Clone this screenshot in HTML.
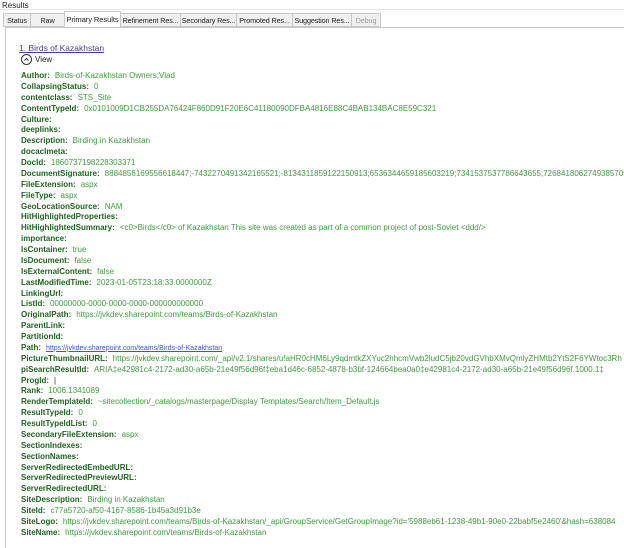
<!DOCTYPE html>
<html><head><meta charset="utf-8"><style>
body{margin:0;width:624px;height:533px;overflow:hidden;background:#fff;font-family:"Liberation Sans",sans-serif;font-size:8px;position:relative}
.hdr{position:absolute;left:2px;top:1px;font-size:8px;color:#222}
.hline{position:absolute;left:0;top:9px;width:624px;height:1px;background:#e6e6e6}
.tabs{position:absolute;left:3px;top:13px;height:14px}
.tab{position:absolute;top:0;border:1px solid #c8c8c8;background:#f0f0f0;line-height:13px;color:#222;font-size:7.2px;letter-spacing:-0.1px;text-align:center;box-sizing:border-box;height:14px;overflow:hidden;white-space:nowrap}
.tab.a{background:#fff;border-bottom-color:#fff;height:16px;top:-2px;line-height:15px;font-size:7.6px}
.tab.d{color:#999}
.panel{position:absolute;left:5px;top:27px;width:640px;height:520px;border-left:1px solid #c8c8c8;border-top:1px solid #c8c8c8}
.link{position:absolute;left:19px;top:43px;color:#4b3a9c;text-decoration:underline;font-size:8.5px}
.view{position:absolute;left:21px;top:54px;color:#222;font-size:8px;display:flex;align-items:center}
.view span.c{width:9px;height:9px;border:1px solid #333;border-radius:50%;display:inline-block;margin-right:3px;position:relative}
.list{position:absolute;left:21px;top:71px;white-space:nowrap}
.list div{height:10.88px;line-height:10.88px}
b{color:#1e641e;font-weight:bold}
i{font-style:normal;color:#3f9c3f;margin-left:5px}
a{color:#3a5cc0;text-decoration:underline;margin-left:5px;font-size:7px}
</style></head><body>
<div class="hdr">Results</div><div class="hline"></div>
<div class="panel"></div>
<div class="tabs">
<div class="tab" style="left:0;width:28px">Status</div>
<div class="tab" style="left:27px;width:35px">Raw</div>
<div class="tab a" style="left:61px;width:57px">Primary Results</div>
<div class="tab" style="left:117px;width:61px">Refinement Res...</div>
<div class="tab" style="left:177px;width:57px">Secondary Res...</div>
<div class="tab" style="left:233px;width:57px">Promoted Res...</div>
<div class="tab" style="left:289px;width:60px">Suggestion Res...</div>
<div class="tab d" style="left:348px;width:30px">Debug</div>
</div>
<div class="link">1. Birds of Kazakhstan</div>
<div class="view"><span class="c"><svg width="9" height="9" style="position:absolute;left:0;top:0"><path d="M2.5 5.5L4.5 3.5L6.5 5.5" stroke="#333" fill="none" stroke-width="1"/></svg></span>View</div>
<div class="list">
<div><b>Author:</b><i>Birds-of-Kazakhstan Owners;Vlad</i></div>
<div><b>CollapsingStatus:</b><i>0</i></div>
<div><b>contentclass:</b><i>STS_Site</i></div>
<div><b>ContentTypeId:</b><i>0x0101009D1CB255DA76424F860D91F20E6C41180090DFBA4816E88C4BAB134BAC8E59C321</i></div>
<div><b>Culture:</b></div>
<div><b>deeplinks:</b></div>
<div><b>Description:</b><i>Birding in Kazakhstan</i></div>
<div><b>docaclmeta:</b></div>
<div><b>DocId:</b><i>1860737198228303371</i></div>
<div><b>DocumentSignature:</b><i>8884856169556618447;-7432270491342165521;-8134311859122150913;6536344659185603219;7341537537786643655;7268418062749385709</i></div>
<div><b>FileExtension:</b><i>aspx</i></div>
<div><b>FileType:</b><i>aspx</i></div>
<div><b>GeoLocationSource:</b><i>NAM</i></div>
<div><b>HitHighlightedProperties:</b></div>
<div><b>HitHighlightedSummary:</b><i>&lt;c0&gt;Birds&lt;/c0&gt; of Kazakhstan This site was created as part of a common project of post-Soviet &lt;ddd/&gt;</i></div>
<div><b>importance:</b></div>
<div><b>IsContainer:</b><i>true</i></div>
<div><b>IsDocument:</b><i>false</i></div>
<div><b>IsExternalContent:</b><i>false</i></div>
<div><b>LastModifiedTime:</b><i>2023-01-05T23:18:33.0000000Z</i></div>
<div><b>LinkingUrl:</b></div>
<div><b>ListId:</b><i>00000000-0000-0000-0000-000000000000</i></div>
<div><b>OriginalPath:</b><i>https://jvkdev.sharepoint.com/teams/Birds-of-Kazakhstan</i></div>
<div><b>ParentLink:</b></div>
<div><b>PartitionId:</b></div>
<div><b>Path:</b><a>https://jvkdev.sharepoint.com/teams/Birds-of-Kazakhstan</a></div>
<div><b>PictureThumbnailURL:</b><i>https://jvkdev.sharepoint.com/_api/v2.1/shares/u!aHR0cHM6Ly9qdmtkZXYuc2hhcmVwb2ludC5jb20vdGVhbXMvQmlyZHMtb2YtS2F6YWtoc3Rh</i></div>
<div><b>piSearchResultId:</b><i>ARIA‡e42981c4-2172-ad30-a65b-21e49f56d96f‡eba1d46c-6852-4878-b3bf-124664bea0a0‡e42981c4-2172-ad30-a65b-21e49f56d96f.1000.1‡</i></div>
<div><b>ProgId:</b><i style="color:#333">|</i></div>
<div><b>Rank:</b><i>1006.1341089</i></div>
<div><b>RenderTemplateId:</b><i>~sitecollection/_catalogs/masterpage/Display Templates/Search/Item_Default.js</i></div>
<div><b>ResultTypeId:</b><i>0</i></div>
<div><b>ResultTypeIdList:</b><i>0</i></div>
<div><b>SecondaryFileExtension:</b><i>aspx</i></div>
<div><b>SectionIndexes:</b></div>
<div><b>SectionNames:</b></div>
<div><b>ServerRedirectedEmbedURL:</b></div>
<div><b>ServerRedirectedPreviewURL:</b></div>
<div><b>ServerRedirectedURL:</b></div>
<div><b>SiteDescription:</b><i>Birding in Kazakhstan</i></div>
<div><b>SiteId:</b><i>c77a5720-af50-4167-8586-1b45a3d91b3e</i></div>
<div><b>SiteLogo:</b><i>https://jvkdev.sharepoint.com/teams/Birds-of-Kazakhstan/_api/GroupService/GetGroupImage?id='5988eb61-1238-49b1-90e0-22babf5e2460'&amp;hash=638084</i></div>
<div><b>SiteName:</b><i>https://jvkdev.sharepoint.com/teams/Birds-of-Kazakhstan</i></div>
</div>
</body></html>
